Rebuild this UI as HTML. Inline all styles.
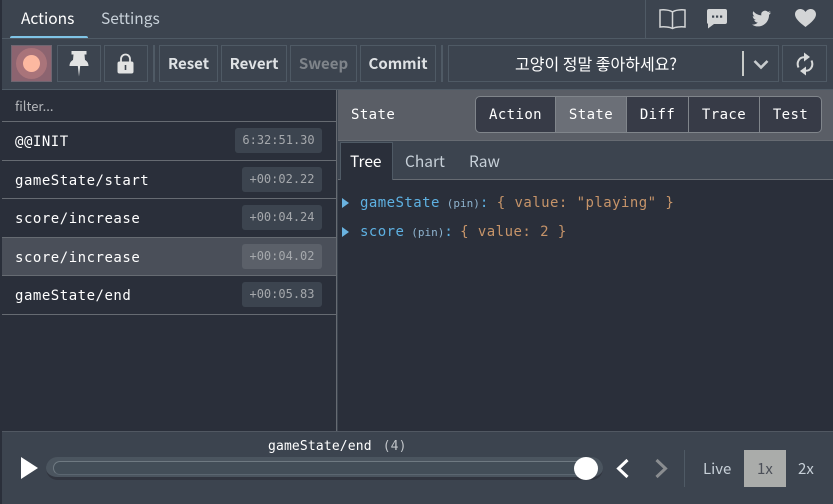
<!DOCTYPE html>
<html><head><meta charset="utf-8">
<style>
*{box-sizing:border-box}
html,body{margin:0;padding:0}
body{width:833px;height:504px;overflow:hidden;position:relative;background:#3c444f;font-family:"Noto Sans CJK KR","Liberation Sans",sans-serif;color:#fff}
.a{position:absolute}
.t{position:absolute;white-space:nowrap;line-height:20px}
.m{font-family:"DejaVu Sans Mono","Liberation Mono",monospace}
.btn{position:absolute;top:45px;height:37px;border:1px solid #4f5a65;background:#3c444f;text-align:center;font-size:15px;font-weight:700;line-height:35px;color:#dfe2e5}
.row{position:absolute;left:2px;width:334px;height:39px;background:#2a2f3a;border-bottom:1px solid #666b72}
.row .n{position:absolute;left:13px;top:10px;font-size:14px;line-height:20px;letter-spacing:.52px;white-space:nowrap;font-family:"DejaVu Sans Mono",monospace}
.row .b{position:absolute;right:14px;top:6px;height:25px;background:#3c444f;border-radius:3px;color:#a5a8ac;font-size:12px;line-height:25px;text-align:center;font-family:"DejaVu Sans Mono",monospace}
.seg{position:absolute;top:96px;height:37px;background:#373b47;border:1px solid #80858b;border-left:0;font:14px/37px "DejaVu Sans Mono",monospace;text-align:center;letter-spacing:.4px;color:#fff}
</style></head><body>
<div class="a" style="left:0;top:0;width:2px;height:504px;background:#2a2f3a"></div>

<div class="t" style="left:21px;top:8px;font-size:15.500px;color:#fff">Actions</div>
<div class="t" style="left:101px;top:8px;font-size:15.500px;color:#c7d0d8">Settings</div>
<div class="a" style="left:10px;top:36px;width:78px;height:2px;background:#7fc4e6;border-radius:2px 2px 0 0"></div>
<div class="a" style="left:2px;top:38px;width:831px;height:1px;background:#4f5a65"></div>
<div class="a" style="left:645px;top:0;width:1px;height:38px;background:#4f5a65"></div>

<svg class="a" style="left:659px;top:8px" width="27" height="22" viewBox="0 0 27 22" fill="none" stroke="#d3d5d6" stroke-width="1.5"><path d="M13.5 4C11 2 5 1.500 1 2V19C5 18.500 11 19 13.500 20.500C16 19 22 18.500 26 19V2C22 1.500 16 2 13.500 4ZM13.500 4V20.500"/></svg>
<svg class="a" style="left:707px;top:9px" width="20" height="20" viewBox="0 0 20 20"><path d="M2 0H18A2 2 0 0 1 20 2V13A2 2 0 0 1 18 15H7L1 19.500V15A2 2 0 0 1 0 13V2A2 2 0 0 1 2 0Z" fill="#d3d5d6"/><rect x="5" y="6.500" width="2.200" height="2.200" fill="#3c444f"/><rect x="9" y="6.500" width="2.200" height="2.200" fill="#3c444f"/><rect x="13" y="6.500" width="2.200" height="2.200" fill="#3c444f"/></svg>
<svg class="a" style="left:752px;top:10px" width="19" height="17" viewBox="0 0 24 20"><path fill="#d3d5d6" d="M24 2.400a9.800 9.800 0 0 1-2.800.8 4.900 4.900 0 0 0 2.100-2.700 9.800 9.800 0 0 1-3.100 1.200A4.900 4.900 0 0 0 11.800 6.100 13.900 13.900 0 0 1 1.700.900a4.900 4.900 0 0 0 1.500 6.500 4.900 4.900 0 0 1-2.200-.6c0 2.400 1.700 4.400 3.900 4.900a4.900 4.900 0 0 1-2.200.1 4.900 4.900 0 0 0 4.600 3.400A9.900 9.900 0 0 1 0 17.700 13.900 13.900 0 0 0 7.500 20c9.100 0 14.300-7.700 14-14.600A10 10 0 0 0 24 2.400z"/></svg>
<svg class="a" style="left:795px;top:9px" width="21" height="18" viewBox="0 0 21 18"><path fill="#d3d5d6" d="M10.500 18C4 13 0 9.500 0 5.300 0 2.200 2.400 0 5.200 0 7.400 0 9.400 1.100 10.500 3 11.600 1.100 13.600 0 15.800 0 18.600 0 21 2.200 21 5.300 21 9.500 17 13 10.500 18Z"/></svg>

<!-- toolbar -->
<div class="a" style="left:11px;top:45px;width:41px;height:37px;background:#8c6470;border:1px solid #6f6671"></div>
<div class="a" style="left:16px;top:48px;width:31px;height:31px;border-radius:50%;background:#a9747a"></div>
<div class="a" style="left:23px;top:55px;width:17px;height:17px;border-radius:50%;background:#fcb8a0"></div>

<div class="btn" style="left:57px;width:44px"></div>
<svg class="a" style="left:69px;top:51px" width="20" height="26" viewBox="0 0 20 26"><path fill="#e2e3e3" d="M2.500 0H17.500V3.500H15.500L16 9C18 10 19.500 12 19.500 15H11.200L10 25.500 8.800 15H0.500C0.500 12 2 10 4 9L4.500 3.500H2.500Z"/></svg>
<div class="btn" style="left:104px;width:44px"></div>
<svg class="a" style="left:117px;top:53px" width="17" height="21" viewBox="0 0 17 21"><path fill="none" stroke="#e2e3e3" stroke-width="1.800" d="M4 9V6A4.500 4.500 0 0 1 13 6V9"/><rect x="0.500" y="8.500" width="16" height="12" rx="2" fill="#e2e3e3"/><rect x="7.700" y="12" width="1.600" height="5" fill="#3c444f"/></svg>
<div class="a" style="left:153px;top:45px;width:2px;height:37px;background:#4f5a65"></div>
<div class="btn" style="left:159px;width:59px">Reset</div>
<div class="btn" style="left:221px;width:66px">Revert</div>
<div class="btn" style="left:290px;width:67px;color:#7f848a">Sweep</div>
<div class="btn" style="left:360px;width:76px">Commit</div>
<div class="a" style="left:441px;top:45px;width:2px;height:37px;background:#4f5a65"></div>
<div class="btn" style="left:448px;width:331px"></div>
<div class="t" style="left:448px;top:53px;width:296px;text-align:center;font-size:16px;font-family:'Noto Sans CJK KR',sans-serif;color:#fff">고양이 정말 좋아하세요?</div>
<div class="a" style="left:742px;top:51px;width:2px;height:25px;background:#c8cbc8"></div>
<svg class="a" style="left:753px;top:59px" width="16" height="11" viewBox="0 0 16 11" fill="none" stroke="#c8ccce" stroke-width="2.600"><path d="M1.500 2L8 8.500 14.500 2"/></svg>
<div class="btn" style="left:782px;width:45px"></div>
<svg class="a" style="left:796px;top:52px" width="18" height="24" viewBox="0 0 18 24" fill="none" stroke="#d8dada" stroke-width="2"><path d="M2.500 15.500C0 10 3.500 5 8.500 5.300M15.500 8.500C18 14 14.500 19 9.500 18.700"/><path fill="#d8dada" stroke="none" d="M8 0.500L14 5 8 9.500ZM10 14.500L4 19 10 23.500Z"/></svg>

<div class="a" style="left:2px;top:89px;width:831px;height:1px;background:#4f5a65"></div>

<!-- left panel -->
<div class="a" style="left:2px;top:90px;width:334px;height:341px;background:#2a2f3a"></div>
<div class="t" style="left:15px;top:96px;font-size:13px;color:#b3b6ba">filter...</div>
<div class="a" style="left:2px;top:121px;width:334px;height:1px;background:#666b72"></div>
<div class="row" style="top:122px"><div class="n">@@INIT</div><div class="b" style="width:87px">6:32:51.30</div></div>
<div class="row" style="top:161px;height:38px"><div class="n">gameState/start</div><div class="b" style="width:80px">+00:02.22</div></div>
<div class="row" style="top:199px"><div class="n">score/increase</div><div class="b" style="width:80px">+00:04.24</div></div>
<div class="row" style="top:238px;height:38px;background:#4a4f59"><div class="n">score/increase</div><div class="b" style="width:80px;background:#5b6069">+00:04.02</div></div>
<div class="row" style="top:276px"><div class="n">gameState/end</div><div class="b" style="width:80px">+00:05.83</div></div>
<div class="a" style="left:336px;top:90px;width:1px;height:341px;background:#666b72"></div>

<!-- right panel -->
<div class="a" style="left:338px;top:90px;width:495px;height:50px;background:#5a5e66"></div>
<div class="t m" style="left:351px;top:105px;font-size:14px;letter-spacing:.4px;color:#fff">State</div>
<div class="seg" style="left:475px;width:81px;border-left:1px solid #80858b;border-radius:5px 0 0 5px">Action</div>
<div class="seg" style="left:556px;width:71px;background:#6b6f77">State</div>
<div class="seg" style="left:627px;width:62px">Diff</div>
<div class="seg" style="left:689px;width:71px">Trace</div>
<div class="seg" style="left:760px;width:62px;border-radius:0 5px 5px 0">Test</div>
<div class="a" style="left:338px;top:140px;width:495px;height:40px;background:#3c444f;border-top:1px solid #666b72;border-bottom:1px solid #666b72"></div>
<div class="a" style="left:340px;top:142px;width:53px;height:38px;background:#2a2f3a;border:1px solid #4f5a65;border-bottom:0"></div>
<div class="t" style="left:350px;top:151px;font-size:15.500px;color:#fff">Tree</div>
<div class="t" style="left:405px;top:151px;font-size:15.500px;color:#c7d0d8">Chart</div>
<div class="t" style="left:469px;top:151px;font-size:15.500px;color:#c7d0d8">Raw</div>
<div class="a" style="left:338px;top:180px;width:495px;height:251px;background:#2a2f3a"></div>

<svg class="a" style="left:342px;top:198px" width="7" height="10"><path d="M0 0L7 5 0 10Z" fill="#6ab3e0"/></svg>
<svg class="a" style="left:342px;top:227px" width="7" height="10"><path d="M0 0L7 5 0 10Z" fill="#6ab3e0"/></svg>
<div class="t m" style="left:360px;top:193px;font-size:14px;letter-spacing:.45px;color:#5eb1e2">gameState <span style="font-size:11px;letter-spacing:0;color:#8fb4cf;margin-left:-2px">(pin)</span><span style="margin-right:-1px">: </span><span style="color:#c69469">{ value: "playing" }</span></div>
<div class="t m" style="left:360px;top:222px;font-size:14px;letter-spacing:.45px;color:#5eb1e2">score <span style="font-size:11px;letter-spacing:0;color:#8fb4cf;margin-left:-2px">(pin)</span><span style="margin-right:-2px">: </span><span style="color:#c69469">{ value: 2 }</span></div>

<!-- footer -->
<div class="a" style="left:2px;top:431px;width:831px;height:1px;background:#515862"></div>
<div class="t m" style="left:268px;top:437px;font-size:13px;letter-spacing:.15px;color:#fff">gameState/end <span style="color:#c0c4c8;margin-left:3px">(4)</span></div>
<svg class="a" style="left:21px;top:457px" width="17" height="22"><path d="M0 0L17 11 0 22Z" fill="#fff"/></svg>
<div class="a" style="left:46px;top:457px;width:557px;height:23px;border-radius:12px;background:#4b555f;border-bottom:3px solid #31353f"></div>
<div class="a" style="left:53px;top:461px;width:535px;height:14px;border-radius:7px;background:#434e58;border:1px solid #6f7a82;border-bottom-color:#5b6670;border-right:0"></div>
<div class="a" style="left:574px;top:457px;width:24px;height:23px;border-radius:50%;background:#fff"></div>
<svg class="a" style="left:615px;top:458px" width="15" height="21" fill="none" stroke="#fff" stroke-width="3"><path d="M12.500 2L3.500 10.500 12.500 19"/></svg>
<svg class="a" style="left:654px;top:458px" width="15" height="21" fill="none" stroke="#8a8d90" stroke-width="3"><path d="M2.500 2L11.500 10.500 2.500 19"/></svg>
<div class="a" style="left:684px;top:450px;width:1px;height:37px;background:#4f5a65"></div>
<div class="t" style="left:703px;top:459px;font-size:15px;color:#c7d0d8">Live</div>
<div class="a" style="left:744px;top:450px;width:42px;height:37px;background:#aaacaa"></div>
<div class="t" style="left:757px;top:459px;font-size:15px;color:#4b4f58">1x</div>
<div class="t" style="left:798px;top:459px;font-size:15px;color:#c7d0d8">2x</div>
</body></html>
